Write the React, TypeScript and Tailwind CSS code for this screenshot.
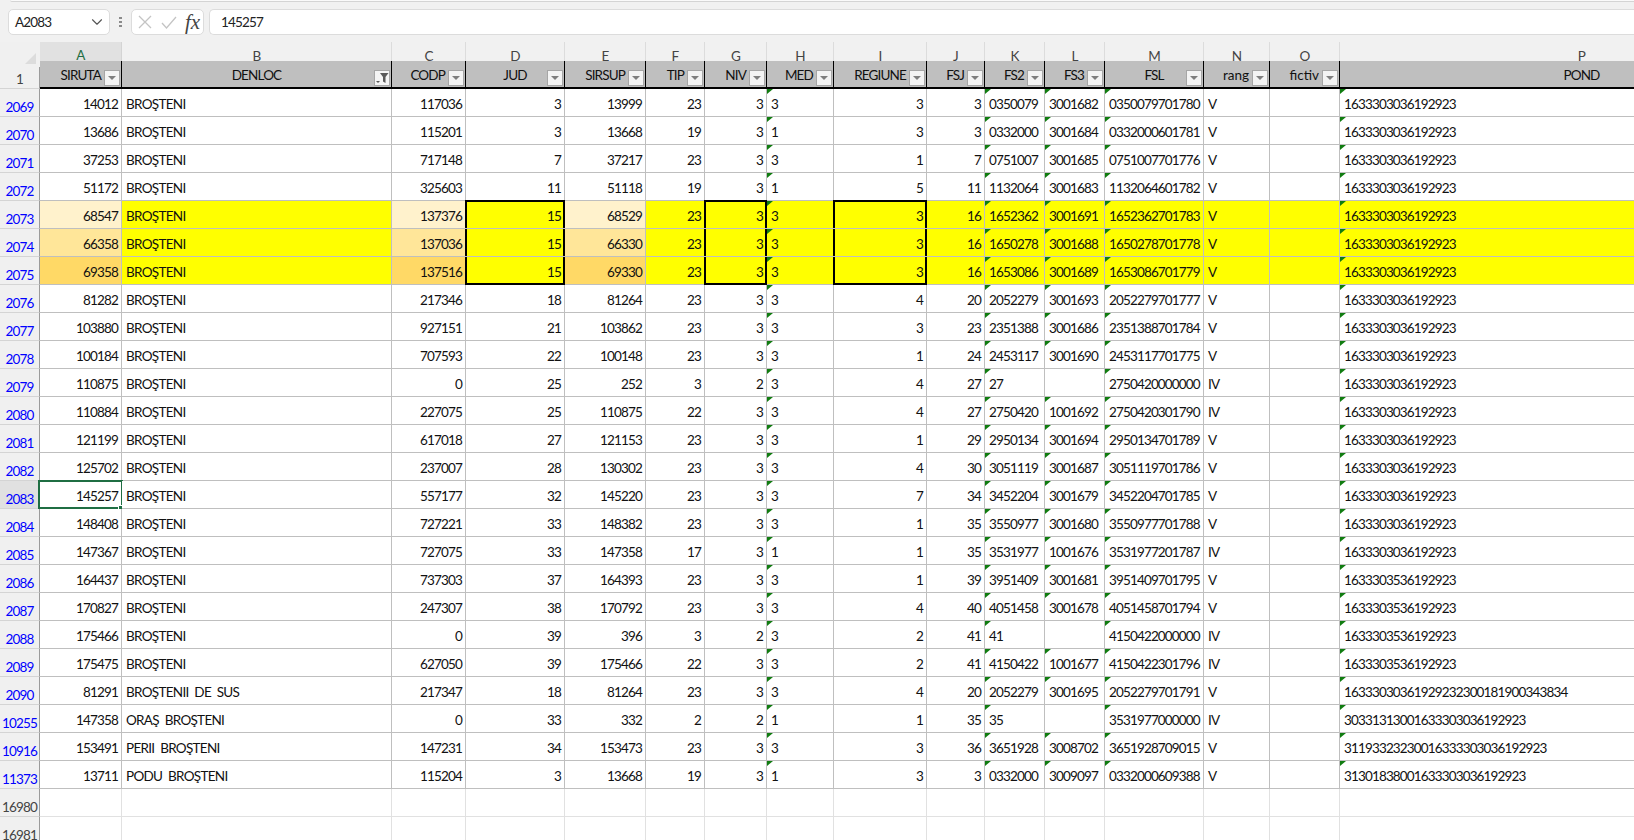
import { ChevronDown } from 'lucide-react';

const colLetters = ['A', 'B', 'C', 'D', 'E', 'F', 'G', 'H', 'I', 'J', 'K', 'L', 'M', 'N', 'O', 'P'];
const headers = ['SIRUTA', 'DENLOC', 'CODP', 'JUD', 'SIRSUP', 'TIP', 'NIV', 'MED', 'REGIUNE', 'FSJ', 'FS2', 'FS3', 'FSL', 'rang', 'fictiv', 'POND'];
const headerAlign = ['r', 'c', 'r', 'c', 'r', 'r', 'r', 'r', 'r', 'r', 'r', 'r', 'c', 'r', 'r', 'c'];

// right aligned numbers, the rest are text cells
const numeric = [true, false, true, true, true, true, true, false, true, true, false, false, false, false, false, false];
const flagged = [7, 10, 11, 12, 15];

const gridCols = 'grid grid-cols-[40px_82px_270px_74px_99px_81px_59px_62px_67px_93px_58px_60px_60px_99px_66px_70px_484px]';

const rows: [string, string[]][] = [
  ['2069', ['14012', 'BROŞTENI', '117036', '3', '13999', '23', '3', '3', '3', '3', '0350079', '3001682', '0350079701780', 'V', '', '1633303036192923']],
  ['2070', ['13686', 'BROŞTENI', '115201', '3', '13668', '19', '3', '1', '3', '3', '0332000', '3001684', '0332000601781', 'V', '', '1633303036192923']],
  ['2071', ['37253', 'BROŞTENI', '717148', '7', '37217', '23', '3', '3', '1', '7', '0751007', '3001685', '0751007701776', 'V', '', '1633303036192923']],
  ['2072', ['51172', 'BROŞTENI', '325603', '11', '51118', '19', '3', '1', '5', '11', '1132064', '3001683', '1132064601782', 'V', '', '1633303036192923']],
  ['2073', ['68547', 'BROŞTENI', '137376', '15', '68529', '23', '3', '3', '3', '16', '1652362', '3001691', '1652362701783', 'V', '', '1633303036192923']],
  ['2074', ['66358', 'BROŞTENI', '137036', '15', '66330', '23', '3', '3', '3', '16', '1650278', '3001688', '1650278701778', 'V', '', '1633303036192923']],
  ['2075', ['69358', 'BROŞTENI', '137516', '15', '69330', '23', '3', '3', '3', '16', '1653086', '3001689', '1653086701779', 'V', '', '1633303036192923']],
  ['2076', ['81282', 'BROŞTENI', '217346', '18', '81264', '23', '3', '3', '4', '20', '2052279', '3001693', '2052279701777', 'V', '', '1633303036192923']],
  ['2077', ['103880', 'BROŞTENI', '927151', '21', '103862', '23', '3', '3', '3', '23', '2351388', '3001686', '2351388701784', 'V', '', '1633303036192923']],
  ['2078', ['100184', 'BROŞTENI', '707593', '22', '100148', '23', '3', '3', '1', '24', '2453117', '3001690', '2453117701775', 'V', '', '1633303036192923']],
  ['2079', ['110875', 'BROŞTENI', '0', '25', '252', '3', '2', '3', '4', '27', '27', '', '2750420000000', 'IV', '', '1633303036192923']],
  ['2080', ['110884', 'BROŞTENI', '227075', '25', '110875', '22', '3', '3', '4', '27', '2750420', '1001692', '2750420301790', 'IV', '', '1633303036192923']],
  ['2081', ['121199', 'BROŞTENI', '617018', '27', '121153', '23', '3', '3', '1', '29', '2950134', '3001694', '2950134701789', 'V', '', '1633303036192923']],
  ['2082', ['125702', 'BROŞTENI', '237007', '28', '130302', '23', '3', '3', '4', '30', '3051119', '3001687', '3051119701786', 'V', '', '1633303036192923']],
  ['2083', ['145257', 'BROŞTENI', '557177', '32', '145220', '23', '3', '3', '7', '34', '3452204', '3001679', '3452204701785', 'V', '', '1633303036192923']],
  ['2084', ['148408', 'BROŞTENI', '727221', '33', '148382', '23', '3', '3', '1', '35', '3550977', '3001680', '3550977701788', 'V', '', '1633303036192923']],
  ['2085', ['147367', 'BROŞTENI', '727075', '33', '147358', '17', '3', '1', '1', '35', '3531977', '1001676', '3531977201787', 'IV', '', '1633303036192923']],
  ['2086', ['164437', 'BROŞTENI', '737303', '37', '164393', '23', '3', '3', '1', '39', '3951409', '3001681', '3951409701795', 'V', '', '1633303536192923']],
  ['2087', ['170827', 'BROŞTENI', '247307', '38', '170792', '23', '3', '3', '4', '40', '4051458', '3001678', '4051458701794', 'V', '', '1633303536192923']],
  ['2088', ['175466', 'BROŞTENI', '0', '39', '396', '3', '2', '3', '2', '41', '41', '', '4150422000000', 'IV', '', '1633303536192923']],
  ['2089', ['175475', 'BROŞTENI', '627050', '39', '175466', '22', '3', '3', '2', '41', '4150422', '1001677', '4150422301796', 'IV', '', '1633303536192923']],
  ['2090', ['81291', 'BROŞTENII DE SUS', '217347', '18', '81264', '23', '3', '3', '4', '20', '2052279', '3001695', '2052279701791', 'V', '', '16333030361929232300181900343834']],
  ['10255', ['147358', 'ORAŞ BROŞTENI', '0', '33', '332', '2', '2', '1', '1', '35', '35', '', '3531977000000', 'IV', '', '30331313001633303036192923']],
  ['10916', ['153491', 'PERII BROŞTENI', '147231', '34', '153473', '23', '3', '3', '3', '36', '3651928', '3008702', '3651928709015', 'V', '', '31193323230016333303036192923']],
  ['11373', ['13711', 'PODU BROŞTENI', '115204', '3', '13668', '19', '3', '1', '3', '3', '0332000', '3009097', '0332000609388', 'V', '', '31301838001633303036192923']],
];

const tint: Record<string, string> = {
  '2073': 'bg-[#fff2cc]',
  '2074': 'bg-[#ffe699]',
  '2075': 'bg-[#ffd966]',
};

function FilterButton({ active }: { active?: boolean }) {
  return (
    <span className="absolute right-[1px] bottom-[1px] flex h-[16px] w-[16px] items-center justify-center border border-[#a6a6a6] bg-[#f4f4f4]">
      {active ? (
        <svg width="14" height="12" viewBox="0 0 14 12">
          <path d="M5 1h8.5L10.5 5v6L8 9.5V5z" fill="#595959" />
          <path d="M1 9h4L3 11z" fill="#595959" />
        </svg>
      ) : (
        <svg width="10" height="6" viewBox="0 0 10 6">
          <path d="M1 1h8L5 5z" fill="#7f7f7f" />
        </svg>
      )}
    </span>
  );
}

function Flag() {
  return (
    <svg className="absolute left-0 top-0" width="6" height="5" viewBox="0 0 6 5">
      <path d="M0 0h6L0 5z" fill="#107c10" />
    </svg>
  );
}

function Outline({ row }: { row: string }) {
  return (
    <span
      className={
        row === '2073'
          ? 'pointer-events-none absolute inset-x-[-1px] top-[-1px] bottom-0 border-x-2 border-t-2 border-black'
          : row === '2074'
            ? 'pointer-events-none absolute inset-x-[-1px] inset-y-0 border-x-2 border-black'
            : 'pointer-events-none absolute inset-x-[-1px] top-0 bottom-[-1px] border-x-2 border-b-2 border-black'
      }
    />
  );
}

function Row({ num, cells }: { num: string; cells: string[] }) {
  const hi = tint[num];
  const active = num === '2083';
  return (
    <div className={`${gridCols} h-[28px]`}>
      <div
        className={`flex items-end justify-center border-r border-b border-b-[#d4d4d4] pb-[2px] leading-[14px] text-[#0000ff] ${
          active ? 'border-r-[#1f6e43] bg-[#e1e1e1]' : 'border-r-[#9b9b9b] bg-[#f0f0f0]'
        }`}
      >
        {num}
      </div>
      {cells.map((text, i) => {
        const tinted = i === 0 || i === 2 || i === 4;
        const bg = hi ? (tinted ? hi : 'bg-[#ffff00]') : 'bg-white';
        return (
          <div
            key={i}
            className={`relative flex items-center overflow-visible whitespace-nowrap border-r border-b border-[#bfbfbf] pt-[4px] pr-[3px] pl-[4px] text-[#111] ${bg} ${numeric[i] ? 'justify-end' : 'justify-start'} ${i === 1 ? 'tracking-[-0.7px] [word-spacing:3px]' : ''}`}
          >
            {flagged.includes(i) && text !== '' && <Flag />}
            {text}
            {hi && (i === 3 || i === 6 || i === 8) && <Outline row={num} />}
            {active && i === 0 && (
              <>
                <span className="pointer-events-none absolute inset-x-[-2px] top-[-1px] bottom-[-1px] border-2 border-[#1f6e43]" />
                <span className="absolute bottom-[-3px] right-[-3px] h-[6px] w-[6px] border border-white bg-[#1f6e43]" />
              </>
            )}
          </div>
        );
      })}
    </div>
  );
}

function EmptyRow({ num }: { num: string }) {
  return (
    <div className={`${gridCols} h-[28px]`}>
      <div className="flex items-end justify-center border-r border-b border-r-[#9b9b9b] border-b-[#d4d4d4] bg-[#f0f0f0] pb-[2px] leading-[14px] text-[#444]">
        {num}
      </div>
      {headers.map((h) => (
        <div key={h} className="border-r border-b border-[#e1e1e1] bg-white" />
      ))}
    </div>
  );
}

export default function App() {
  return (
    <div className="h-[840px] w-[1634px] overflow-hidden bg-[#f1f1f1] font-['Lato',sans-serif] text-[13.5px] tracking-[-0.85px]">
      {/* ribbon edge */}
      <div className="h-[3px]">
        <div className="ml-[10px] h-[2px] rounded-bl-[4px] border-b border-[#d4d4d4] bg-[#fafafa]" />
      </div>

      {/* formula bar */}
      <div className="flex h-[39px] items-start pt-[6px] pl-[8px]">
        <div className="flex h-[26px] w-[102px] items-center justify-between rounded-[5px] border border-[#dcdcdc] bg-white pr-[3px] pl-[6px] text-[#222]">
          A2083
          <ChevronDown size={18} strokeWidth={1.5} className="text-[#555]" />
        </div>
        <div className="flex h-[26px] w-[21px] items-center justify-center">
          <span className="flex flex-col gap-[2px]">
            <span className="h-[2px] w-[3px] bg-[#8a8a8a]" />
            <span className="h-[2px] w-[3px] bg-[#8a8a8a]" />
            <span className="h-[2px] w-[3px] bg-[#8a8a8a]" />
          </span>
        </div>
        <div className="flex h-[26px] w-[73px] items-center rounded-[5px] border border-[#dcdcdc] bg-white pl-[6px]">
          <svg width="14" height="14" viewBox="0 0 14 14" fill="none" stroke="#c4c4c4" strokeWidth="1.3">
            <path d="M1 1l12 12M13 1L1 13" />
          </svg>
          <svg className="ml-[9px]" width="16" height="13" viewBox="0 0 16 13" fill="none" stroke="#c4c4c4" strokeWidth="1.3">
            <path d="M1 7l4.5 5L15 1" />
          </svg>
          <span className="ml-[8px] font-['Liberation_Serif',serif] text-[21px] leading-none tracking-normal text-[#444] italic">fx</span>
        </div>
        <div className="ml-[5px] flex h-[26px] flex-1 items-center rounded-l-[5px] border border-r-0 border-[#dcdcdc] bg-white pl-[11px] text-[#222]">
          145257
        </div>
      </div>

      {/* column letters */}
      <div className={`${gridCols} h-[19px] text-center`}>
        <div className="relative bg-[#f0f0f0]">
          <svg className="absolute right-[4px] bottom-[3px]" width="11" height="11" viewBox="0 0 11 11">
            <path d="M11 0v11H0z" fill="#dcdcdc" />
          </svg>
        </div>
        {colLetters.map((c) => (
          <div
            key={c}
            className={
              c === 'A'
                ? 'flex items-center justify-center border-r border-b-2 border-r-[#d4d4d4] border-b-[#1f6e43] bg-[#e1e1e1] pt-[3px] text-[#1f6e43]'
                : 'flex items-center justify-center border-r border-b border-r-[#dcdcdc] border-b-[#9b9b9b] pt-[3px] text-[#444]'
            }
          >
            {c}
          </div>
        ))}
      </div>

      {/* header row */}
      <div className={`${gridCols} h-[28px]`}>
        <div className="flex items-end justify-center border-r border-b border-r-[#9b9b9b] border-b-[#d4d4d4] bg-[#f0f0f0] pb-[2px] leading-[14px] text-[#444]">1</div>
        {headers.map((h, i) => (
          <div
            key={h}
            className={`relative flex items-center whitespace-nowrap border-r border-b-2 border-black bg-[#bfbfbf] pt-[2px] text-[#111] ${
              headerAlign[i] === 'c' ? 'justify-center' : 'justify-end pr-[20px]'
            } ${h === 'rang' || h === 'fictiv' ? 'tracking-[0px]' : ''}`}
          >
            {h}
            {h !== 'POND' && <FilterButton active={h === 'DENLOC'} />}
          </div>
        ))}
      </div>

      {rows.map(([num, cells]) => (
        <Row key={num} num={num} cells={cells} />
      ))}
      <EmptyRow num="16980" />
      <EmptyRow num="16981" />
    </div>
  );
}
